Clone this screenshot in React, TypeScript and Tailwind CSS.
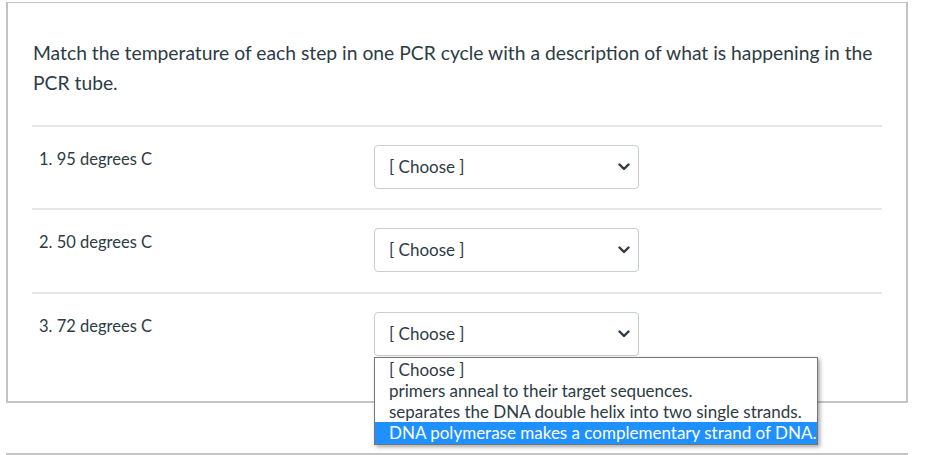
import React from "react";

const rows = ["1. 95 degrees C", "2. 50 degrees C", "3. 72 degrees C"];
const options = [
  "[ Choose ]",
  "primers anneal to their target sequences.",
  "separates the DNA double helix into two single strands.",
  "DNA polymerase makes a complementary strand of DNA.",
];

function Chevron() {
  return (
    <svg width="12" height="8" viewBox="0 0 12 8" className="text-[#2d3b45]">
      <path d="M1.5 1.5 L6 6 L10.5 1.5" fill="none" stroke="currentColor" strokeWidth="2.4" strokeLinecap="round" strokeLinejoin="round" />
    </svg>
  );
}

function Select({ open }: { open?: boolean }) {
  return (
    <div className="relative w-[265px]">
      <div className="flex h-[44px] items-center justify-between rounded-[4px] border border-[#c7cdd1] bg-white pl-[14px] pr-[8px] text-[17px] text-[#2d3b45]">
        <span>[ Choose ]</span>
        <Chevron />
      </div>
      {open && (
        <div className="absolute left-0 top-[45px] z-10 w-[444px] border border-[#767676] bg-white pt-[1px] text-[17px] text-[#2d3b45] shadow-[2px_2px_4px_rgba(0,0,0,0.35)]">
          {options.map((o, i) => (
            <div
              key={o}
              className={
                i === 3
                  ? "bg-[#1e90ff] pl-[14px] leading-[22px] text-white"
                  : "pl-[14px] leading-[21px]"
              }
            >
              {o}
            </div>
          ))}
        </div>
      )}
    </div>
  );
}

export default function App() {
  return (
    <div className="h-[455px] w-[936px] overflow-hidden bg-white pt-[2px] font-['Lato','Noto_Sans',sans-serif] text-[#2d3b45]">
      <div className="ml-[6px] w-[902px] border border-b-[2px] border-l-[2px] border-r-[2px] border-t-[1px] border-[#c4c4c4] px-[24px] pb-[26px] pt-[35px]">
        <p className="mb-[27px] pl-[1px] text-[19.3px] leading-[30px]">
          Match the temperature of each step in one PCR cycle with a description of what is happening in the PCR tube.
        </p>
        {rows.map((r, i) => (
          <div key={r} className={"flex border-t-2 border-[#e6e6e6] pt-[18px] " + (i === 1 ? "pb-[20px]" : "pb-[19px]")}>
            <div className="w-[342px] pl-[7px] pt-[4px] text-[16.5px] leading-[20px]">{r}</div>
            <Select open={i === 2} />
          </div>
        ))}
      </div>
      <div className="ml-[6px] mt-[50px] h-[20px] w-[902px] border-l-2 border-r-2 border-t-2 border-[#c4c4c4]" />
    </div>
  );
}
